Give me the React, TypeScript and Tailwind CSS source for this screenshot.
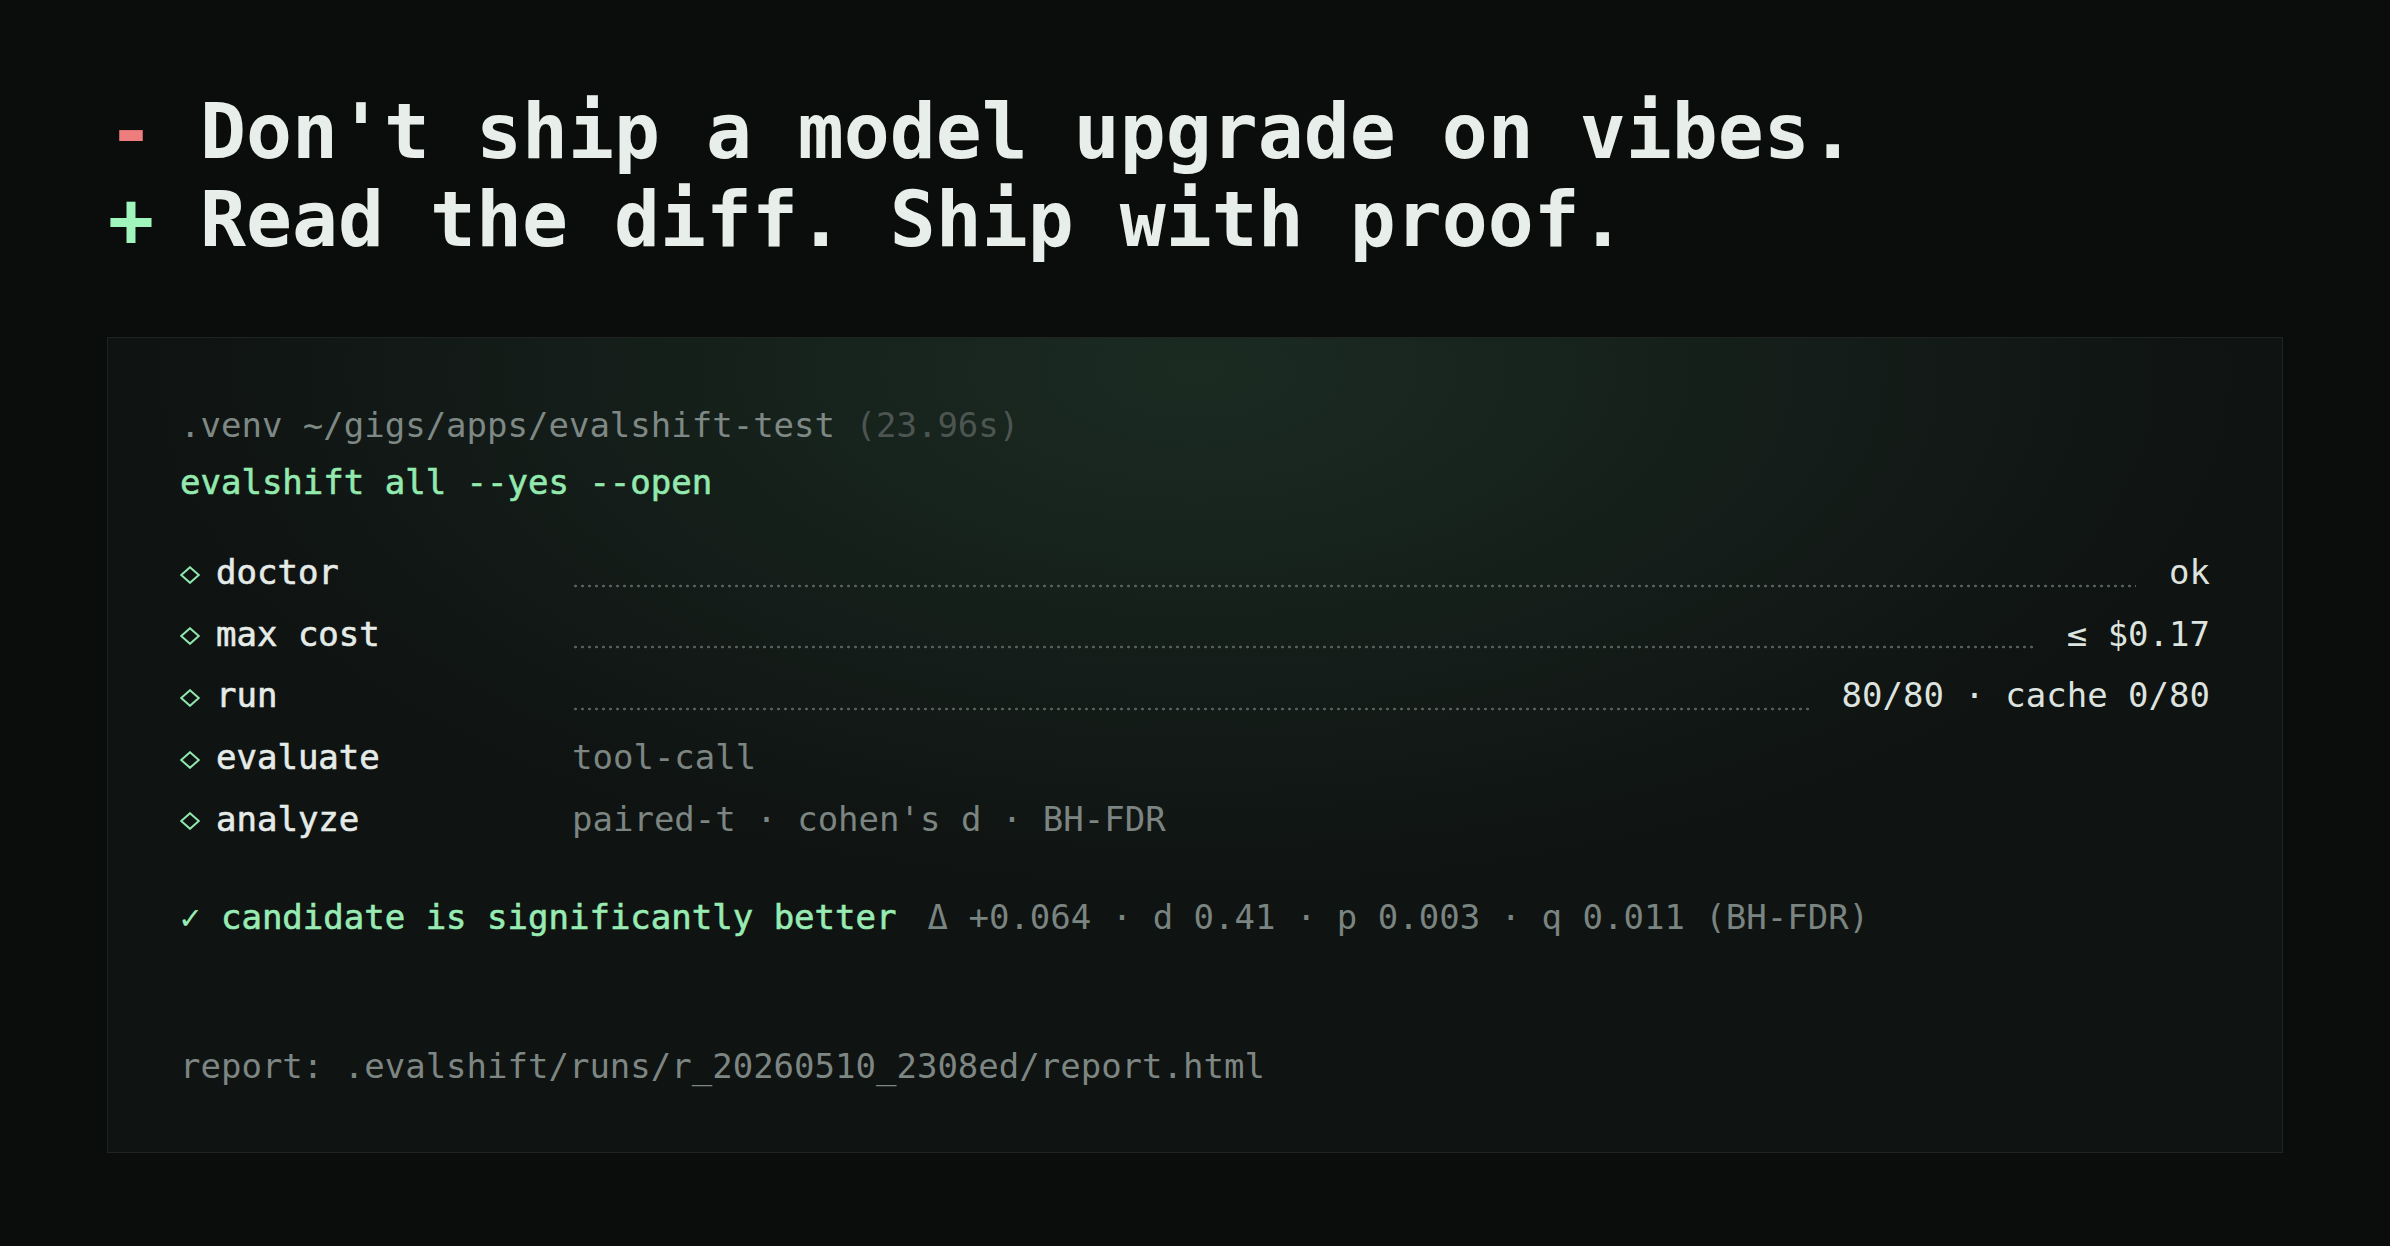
import React from "react";

function Diamond() {
  return (
    <svg width="20" height="18" viewBox="0 0 20 18" className="inline-block align-middle">
      <path d="M10 1.2 L18.8 9 L10 16.8 L1.2 9 Z" fill="none" stroke="#8fe8ad" strokeWidth="2" />
    </svg>
  );
}

type RowProps = { label: string; value: string; leader?: boolean };

function Row({ label, value, leader }: RowProps) {
  return (
    <div className="flex leading-[61.7px] whitespace-pre">
      <div className="w-[392px] shrink-0 text-[#e5ebe7] [-webkit-text-stroke:0.6px_#e5ebe7]">
        <Diamond />
        <span className="ml-[16px]">{label}</span>
      </div>
      {leader ? (
        <>
          <div className="flex-1 self-end mb-[16px] mr-[33px] h-[4px] bg-[radial-gradient(circle,#555e5a_1.1px,transparent_1.7px)] bg-[length:7px_4px] bg-repeat-x" />
          <div className="text-[#dde3df]">{value}</div>
        </>
      ) : (
        <div className="text-[#7c8581]">{value}</div>
      )}
    </div>
  );
}

export default function App() {
  return (
    <div className="min-h-[1246px] w-full bg-[#0b0d0c] px-[107px] pt-[88px] font-['DejaVu_Sans_Mono',monospace]">
      <div className="pl-[1px] text-[76.4px] leading-[88px] font-bold text-[#e8eeea] whitespace-pre">
        <div>
          <span className="text-[#ee7d7d]">-</span> Don't ship a model upgrade on vibes.
        </div>
        <div>
          <span className="text-[#9ff5bb]">+</span> Read the diff. Ship with proof.
        </div>
      </div>

      <div className="mt-[73px] h-[816px] border border-[#1d2422] bg-[#0f1312] bg-[radial-gradient(ellipse_1050px_520px_at_50%_4%,rgba(74,140,100,0.2),transparent)] px-[72px] pt-[59px] text-[34px]">
        <div className="leading-[57px] whitespace-pre text-[#7e8884]">
          .venv ~/gigs/apps/evalshift-test <span className="text-[#4d5552]">(23.96s)</span>
        </div>
        <div className="leading-[57px] whitespace-pre text-[#93e9ae] [-webkit-text-stroke:0.6px_#93e9ae]">
          evalshift all --yes --open
        </div>

        <div className="mt-[31px]">
          <Row label="doctor" value="ok" leader />
          <Row label="max cost" value="≤ $0.17" leader />
          <Row label="run" value="80/80 · cache 0/80" leader />
          <Row label="evaluate" value="tool-call" />
          <Row label="analyze" value="paired-t · cohen's d · BH-FDR" />
        </div>

        <div className="mt-[36px] flex leading-[61.7px] whitespace-pre">
          <span className="text-[#98ecb3]">✓ </span>
          <span className="text-[#98ecb3] [-webkit-text-stroke:0.6px_#98ecb3]">candidate is significantly better</span>
          <span className="ml-[31px] text-[#7a8480]">Δ +0.064 · d 0.41 · p 0.003 · q 0.011 (BH-FDR)</span>
        </div>

        <div className="mt-[90px] leading-[57px] whitespace-pre text-[#7d8682]">
          report: .evalshift/runs/r_20260510_2308ed/report.html
        </div>
      </div>
    </div>
  );
}
